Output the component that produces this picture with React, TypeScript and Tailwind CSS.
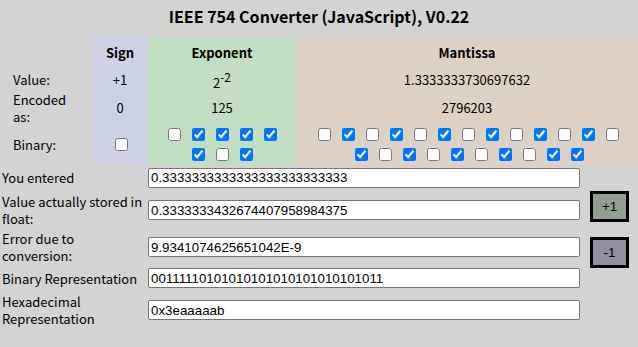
const expBits = "01111101"
const manBits = "01010101010101010101011"

function Bits({ bits }: { bits: string }) {
  return (
    <div className="flex justify-center gap-[11px]">
      {bits.split("").map((b, i) => (
        <input
          key={i}
          type="checkbox"
          defaultChecked={b === "1"}
          className="m-0 w-[13px] h-[13px]"
        />
      ))}
    </div>
  )
}

function Field({ value }: { value: string }) {
  return (
    <input
      type="text"
      defaultValue={value}
      className="shrink-0 w-[432px] h-[20px] bg-white border border-[#767676] rounded-[2px] px-[2px] text-[13.33px] text-black font-['Liberation_Sans',Arial,sans-serif] outline-none"
    />
  )
}

function Label({ children }: { children: React.ReactNode }) {
  return <div className="shrink-0 w-[146px]">{children}</div>
}

export default function App() {
  return (
    <div className="w-[638px] h-[347px] bg-[#d3d3d3] text-black font-['Noto_Sans_CJK_KR','Noto_Sans',sans-serif] text-[13px] leading-[17px] overflow-hidden">
      <h1 className="h-[37px] flex items-center justify-center text-[16px] font-bold pb-[5px]">
        IEEE 754 Converter (JavaScript), V0.22
      </h1>

      <div className="grid grid-cols-[92px_56px_148px_1fr] grid-rows-[30px_25px_31px_42px]">
        <div />
        <div className="bg-[#d0d0e6] flex items-center justify-center font-bold">Sign</div>
        <div className="bg-[#c2dec2] flex items-center justify-center font-bold">Exponent</div>
        <div className="bg-[#ddd1c5] flex items-center justify-center font-bold">Mantissa</div>

        <div className="flex items-center pl-[13px]">Value:</div>
        <div className="bg-[#d0d0e6] flex items-center justify-center">+1</div>
        <div className="bg-[#c2dec2] flex items-center justify-center">
          <span className="mt-[6px]">2</span>
          <span className="text-[12px] -mt-[6px]">-2</span>
        </div>
        <div className="bg-[#ddd1c5] flex items-center justify-center">1.3333333730697632</div>

        <div className="flex items-center pl-[13px]">
          Encoded
          <br />
          as:
        </div>
        <div className="bg-[#d0d0e6] flex items-center justify-center">0</div>
        <div className="bg-[#c2dec2] flex items-center justify-center">125</div>
        <div className="bg-[#ddd1c5] flex items-center justify-center">2796203</div>

        <div className="flex items-center pl-[13px]">Binary:</div>
        <div className="bg-[#d0d0e6] flex items-center justify-center pl-[2px]">
          <input type="checkbox" className="m-0 w-[13px] h-[13px]" />
        </div>
        <div className="bg-[#c2dec2] flex flex-col gap-[7px] pt-[5px]">
          <Bits bits={expBits.slice(0, 5)} />
          <Bits bits={expBits.slice(5)} />
        </div>
        <div className="bg-[#ddd1c5] flex flex-col gap-[7px] pt-[5px] pl-[3px]">
          <Bits bits={manBits.slice(0, 13)} />
          <div className="pl-[2px]">
            <Bits bits={manBits.slice(13)} />
          </div>
        </div>
      </div>

      <div className="flex">
        <div className="shrink-0 flex flex-col pl-[2px]">
          <div className="h-[25px] flex items-center">
            <Label>You entered</Label>
            <Field value="0.3333333333333333333333333" />
          </div>
          <div className="h-[40px] flex items-center">
            <Label>
              Value actually stored in
              <br />
              float:
            </Label>
            <Field value="0.3333333432674407958984375" />
          </div>
          <div className="h-[34px] flex items-center">
            <Label>
              Error due to
              <br />
              conversion:
            </Label>
            <Field value="9.9341074625651042E-9" />
          </div>
          <div className="h-[28px] flex items-center">
            <Label>Binary Representation</Label>
            <Field value="00111110101010101010101010101011" />
          </div>
          <div className="h-[36px] flex items-center">
            <Label>
              Hexadecimal
              <br />
              Representation
            </Label>
            <Field value="0x3eaaaaab" />
          </div>
        </div>

        <div className="flex flex-col pl-[10px] pt-[26px] gap-[15px]">
          <button className="w-[39px] h-[31px] bg-[#8fa08f] border-[3px] border-black text-[13.33px] font-['Liberation_Sans',Arial,sans-serif]">
            +1
          </button>
          <button className="w-[39px] h-[31px] bg-[#9190a1] border-[3px] border-black text-[13.33px] font-['Liberation_Sans',Arial,sans-serif]">
            -1
          </button>
        </div>
      </div>
    </div>
  )
}
